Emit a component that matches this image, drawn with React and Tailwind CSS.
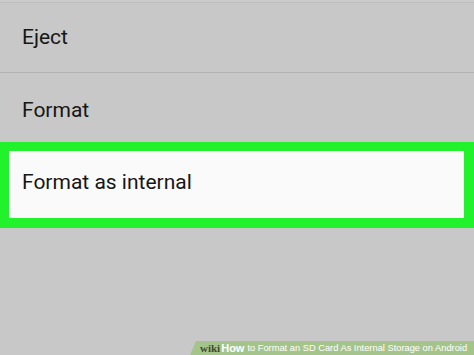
export default function App() {
  return (
    <div className="relative w-[474px] h-[355px] overflow-hidden bg-[#c8c8c8] text-[#161616] [font-family:Roboto,'Liberation_Sans',sans-serif]">
      <div className="h-[3px] bg-[#cbcbcb] border-b border-[#bdbdbd]" />
      <div className="h-[69px] flex items-center pl-[22px] text-[21px] leading-none">Eject</div>
      <div className="h-px bg-[#b2b2b2]" />
      <div className="h-[69px] flex items-center pl-[22px] pt-[6px] text-[21px] leading-none">Format</div>
      <div className="h-[86px] bg-[#22f22c] p-[9px] pr-[10px] pb-[10px]">
        <div className="h-full bg-[#fafafa] flex items-center pl-[13px] pb-[5px] text-[21px] leading-none">Format as internal</div>
      </div>
      <div className="absolute right-0 bottom-0 h-[14px] w-[284px] bg-[#a5c48c] [clip-path:polygon(6px_0,100%_0,100%_100%,0_100%)] flex items-center pl-[10px] pt-[1px] leading-none whitespace-nowrap [font-family:'Liberation_Sans',Arial,sans-serif]">
        <span className="font-bold text-[#3d4a33] [font-family:'Liberation_Serif',serif] text-[11px]">wiki</span>
        <span className="font-bold text-white ml-[1px] text-[11px]">How</span>
        <span className="text-white ml-[3px] text-[9.3px]">to Format an SD Card As Internal Storage on Android</span>
      </div>
    </div>
  );
}
